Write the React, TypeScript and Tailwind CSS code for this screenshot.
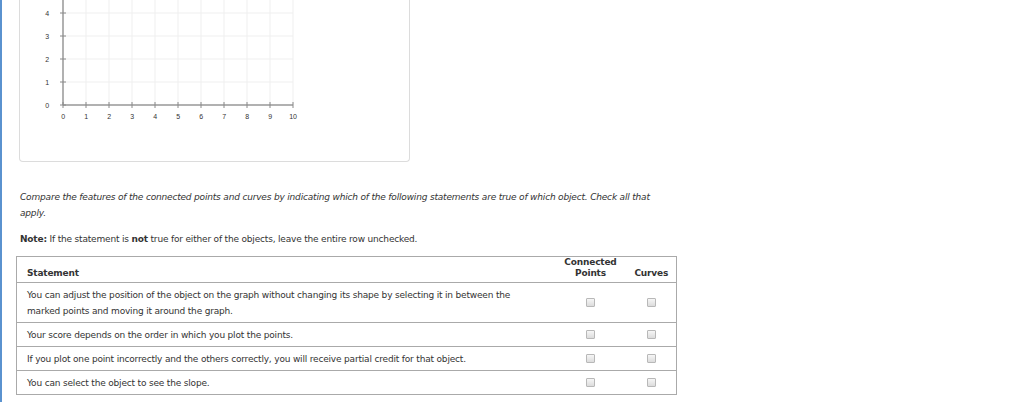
import React from "react";

const rows = [
  {
    text: "You can adjust the position of the object on the graph without changing its shape by selecting it in between the marked points and moving it around the graph.",
    tall: true,
  },
  { text: "Your score depends on the order in which you plot the points.", tall: false },
  {
    text: "If you plot one point incorrectly and the others correctly, you will receive partial credit for that object.",
    tall: false,
  },
  { text: "You can select the object to see the slope.", tall: false },
];

const Graph = () => {
  const ox = 43;
  const oy = 105;
  const step = 23;
  const xs = Array.from({ length: 11 }, (_, i) => i);
  const ys = Array.from({ length: 6 }, (_, i) => i);
  return (
    <svg width="389" height="161" className="block">
      {/* grid */}
      {xs.map((i) => (
        <line key={"gx" + i} x1={ox + i * step} y1={0} x2={ox + i * step} y2={oy} stroke="#efefef" strokeWidth="1" />
      ))}
      {ys.map((i) => (
        <line key={"gy" + i} x1={ox} y1={oy - i * step} x2={ox + 10 * step} y2={oy - i * step} stroke="#efefef" strokeWidth="1" />
      ))}
      {/* axes */}
      <line x1={ox} y1={0} x2={ox} y2={oy} stroke="#9a9a9a" strokeWidth="1.5" />
      <line x1={ox} y1={oy} x2={ox + 10 * step} y2={oy} stroke="#9a9a9a" strokeWidth="1.5" />
      {xs.map((i) => (
        <line key={"tx" + i} x1={ox + i * step} y1={oy - 3} x2={ox + i * step} y2={oy + 3} stroke="#8a8a8a" strokeWidth="1" />
      ))}
      {ys.map((i) => (
        <line key={"ty" + i} x1={ox - 3} y1={oy - i * step} x2={ox + 3} y2={oy - i * step} stroke="#8a8a8a" strokeWidth="1" />
      ))}
      {/* labels */}
      {xs.map((i) => (
        <text
          key={"lx" + i}
          x={ox + i * step}
          y={oy + 14}
          textAnchor="middle"
          fontSize="7"
          fill="#333"
          fontFamily="'Liberation Sans', Arial, sans-serif"
        >
          {i}
        </text>
      ))}
      {ys.slice(0, 5).map((i) => (
        <text
          key={"ly" + i}
          x={27}
          y={oy - i * step + 2.5}
          textAnchor="middle"
          fontSize="7"
          fill="#333"
          fontFamily="'Liberation Sans', Arial, sans-serif"
        >
          {i}
        </text>
      ))}
    </svg>
  );
};

const Box = () => (
  <input
    type="checkbox"
    className="appearance-none w-[9px] h-[9px] border border-[#b8b8b8] rounded-[1px] bg-gradient-to-b from-[#f6f6f6] to-[#dcdcdc] align-middle m-0"
  />
);

export default function App() {
  return (
    <div className="h-[402px] w-[1024px] bg-white border-l-2 border-[#5a92cf] overflow-hidden font-['DejaVu_Sans',Verdana,sans-serif] text-[9px] tracking-[-0.18px] text-[#333]">
      <div className="ml-[17px] w-[391px] h-[162px] border-x border-b border-[#dcdcdc] rounded-b-[4px]">
        <Graph />
      </div>

      <p className="ml-[18px] mt-[27px] w-[640px] italic leading-[16px]">
        Compare the features of the connected points and curves by indicating which of the following statements are true of which object. Check all that apply.
      </p>
      <p className="ml-[18px] mt-[10px] leading-[16px]">
        <span className="font-bold">Note:</span> If the statement is <span className="font-bold">not</span> true for either of the objects, leave the entire row unchecked.
      </p>

      <table className="ml-[14px] mt-[9px] w-[661px] border-collapse border border-[#aaa]">
        <thead>
          <tr className="border-b border-[#aaa] h-[26px]">
            <th className="text-left align-bottom pl-[10px] pb-[3px] font-bold leading-[11px]">Statement</th>
            <th className="w-[72px] align-bottom pb-[3px] font-bold leading-[11px]">
              Connected
              <br />
              Points
            </th>
            <th className="w-[50px] align-bottom pb-[3px] font-bold leading-[11px]">Curves</th>
          </tr>
        </thead>
        <tbody>
          {rows.map((r, i) => (
            <tr key={i} className={`border-b border-[#aaa] ${r.tall ? "h-[40px]" : "h-[24px]"}`}>
              <td className="pl-[10px] pr-[40px] leading-[16px] align-middle">{r.text}</td>
              <td className="text-center align-middle">
                <Box />
              </td>
              <td className="text-center align-middle">
                <Box />
              </td>
            </tr>
          ))}
        </tbody>
      </table>
    </div>
  );
}
